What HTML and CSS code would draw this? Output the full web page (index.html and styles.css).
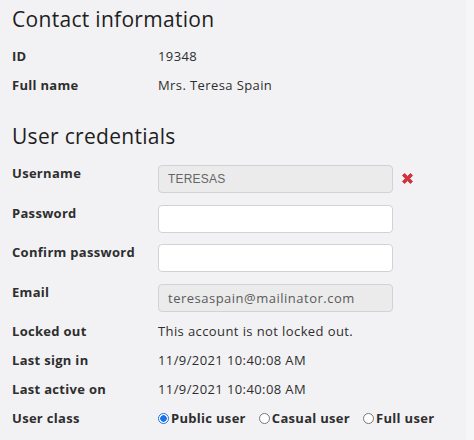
FILE: index.html
```
<!DOCTYPE html>
<html>
<head>
<meta charset="utf-8">
<link rel="stylesheet" href="styles.css">
</head>
<body>
<div class="page">
  <h2 class="heading">Contact information</h2>
  <div class="form">
    <div class="row text-row"><div class="label">ID</div><div class="value">19348</div></div>
    <div class="row text-row"><div class="label">Full name</div><div class="value">Mrs. Teresa Spain</div></div>
  </div>
  <h2 class="heading second">User credentials</h2>
  <div class="form">
    <div class="row input-row">
      <div class="label">Username</div>
      <div class="value field-wrap">
        <input class="field disabled mono" type="text" value="TERESAS" disabled>
        <svg class="xicon" width="13" height="13" viewBox="0 0 13 13"><path d="M1.5 3.6 L3.6 1.5 L6.5 4.4 L9.4 1.5 L11.5 3.6 L8.6 6.5 L11.5 9.4 L9.4 11.5 L6.5 8.6 L3.6 11.5 L1.5 9.4 L4.4 6.5 Z" fill="#d0343c" stroke="#d0343c" stroke-width="1" stroke-linejoin="round"/></svg>
      </div>
    </div>
    <div class="row input-row">
      <div class="label">Password</div>
      <div class="value"><input class="field" type="password"></div>
    </div>
    <div class="row input-row">
      <div class="label">Confirm password</div>
      <div class="value"><input class="field" type="password"></div>
    </div>
    <div class="row input-row">
      <div class="label">Email</div>
      <div class="value"><input class="field disabled" type="text" value="teresaspain@mailinator.com" disabled></div>
    </div>
    <div class="row text-row"><div class="label">Locked out</div><div class="value">This account is not locked out.</div></div>
    <div class="row text-row"><div class="label">Last sign in</div><div class="value">11/9/2021 10:40:08 AM</div></div>
    <div class="row text-row"><div class="label">Last active on</div><div class="value">11/9/2021 10:40:08 AM</div></div>
    <div class="row text-row">
      <div class="label">User class</div>
      <div class="value radios">
        <label class="radio"><span class="dot checked"></span>Public user</label>
        <label class="radio"><span class="dot"></span>Casual user</label>
        <label class="radio"><span class="dot"></span>Full user</label>
      </div>
    </div>
  </div>
</div>
</body>
</html>
```
FILE: styles.css
```
html, body {
  margin: 0;
  padding: 0;
}
body {
  background: #f2f2f4;
  font-family: "Open Sans", "DejaVu Sans", sans-serif;
  color: #222;
  width: 474px;
  height: 440px;
  overflow: hidden;
}
.page {
  padding: 5px 12px 0 12px;
  border-right: 8px solid #f6f6f8;
  height: 440px;
  box-sizing: border-box;
  width: 474px;
}
.heading {
  margin: 0 0 9px 0;
  font-size: 21px;
  font-weight: 400;
  letter-spacing: 0.3px;
  color: #1e1e1e;
  line-height: 28px;
  height: 28px;
}
.heading.second {
  margin-top: 22px;
}
.form {
  display: flex;
  flex-direction: column;
}
.row {
  display: grid;
  grid-template-columns: 146px 1fr;
  font-size: 13px;
}
.text-row {
  height: 29px;
  line-height: 29px;
}
.input-row {
  height: 39.5px;
  box-sizing: border-box;
  padding-top: 6px;
}
.input-row .label {
  line-height: 18px;
  margin-top: -1px;
}
.label {
  font-weight: 700;
  color: #2e2e2e;
  letter-spacing: 0.3px;
}
.value {
  color: #2e2e2e;
  letter-spacing: 0.4px;
}
.field-wrap {
  display: flex;
  align-items: center;
  gap: 8px;
  height: 28px;
}
.field {
  box-sizing: border-box;
  width: 235px;
  height: 28px;
  border: 1px solid #d2d2d4;
  border-radius: 4px;
  background: #ffffff;
  padding: 0 9px;
  font-family: "Open Sans", "DejaVu Sans", sans-serif;
  font-size: 13px;
  letter-spacing: 0.5px;
  color: #555;
  margin: 0;
  display: block;
}
.field.disabled {
  background: #ebebec;
  color: #5a5a5a;
}
.field.mono {
  font-family: "Liberation Sans", Arial, sans-serif;
  font-size: 12px;
  letter-spacing: 0.2px;
  color: #666;
}
.xicon {
  display: block;
  margin-top: -2px;
}
.radios {
  display: flex;
  align-items: center;
  gap: 13px;
  font-weight: 700;
  letter-spacing: 0.3px;
}
.radio {
  display: flex;
  align-items: center;
  gap: 2px;
}
.dot {
  box-sizing: border-box;
  width: 11px;
  height: 11px;
  border-radius: 50%;
  border: 1px solid #777;
  background: #fff;
}
.dot.checked {
  border: 1px solid #1a73e8;
  background: radial-gradient(circle, #1a73e8 0 3px, #fff 3.5px);
}
```
